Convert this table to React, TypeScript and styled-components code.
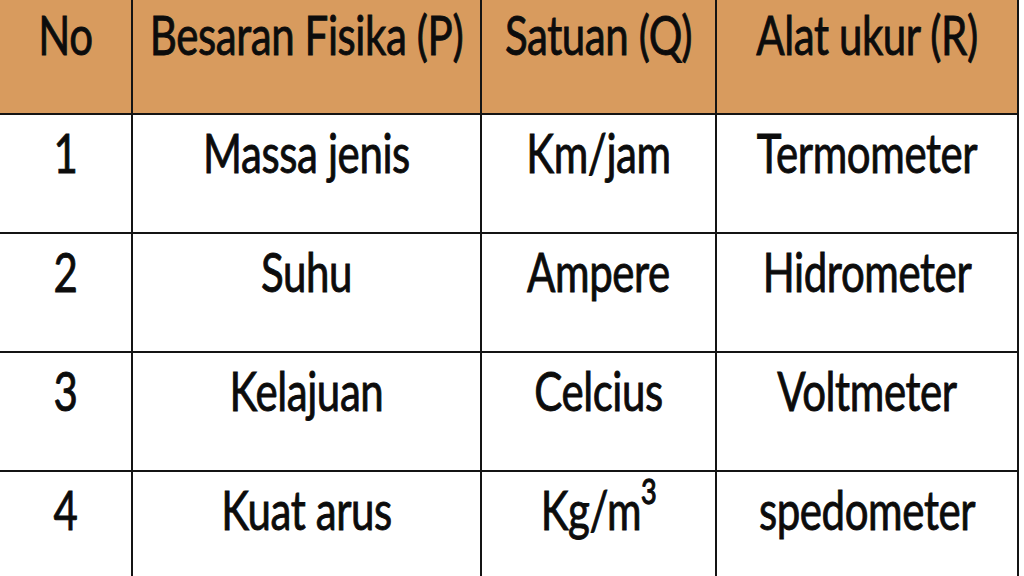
import { createGlobalStyle } from 'styled-components'
import styled from 'styled-components'

const GlobalStyle = createGlobalStyle`
  html, body {
    margin: 0;
    padding: 0;
    background: #ffffff;
    overflow: hidden;
  }
  body {
    width: 1024px;
    height: 576px;
    font-family: Lato, 'Open Sans', sans-serif;
  }
`

const Page = styled.div`
  width: 1024px;
  height: 576px;
  overflow: hidden;
  background: #ffffff;
`

const Table = styled.table`
  border-collapse: collapse;
  table-layout: fixed;
  margin: -2px 0 0 -2px;
  width: 1021px;
`

const Row = styled.tr<{ $head?: boolean }>`
  height: ${(p) => (p.$head ? '115px' : '119px')};
`

const Cell = styled.td<{ $head?: boolean }>`
  border: 2px solid #141414;
  background: ${(p) => (p.$head ? '#d89b5e' : '#ffffff')};
  padding: ${(p) => (p.$head ? '14px 0 0' : '17px 0 0')};
  vertical-align: top;
  text-align: center;
  color: #0c0c0c;
  font-weight: 400;
`

const Label = styled.span`
  display: inline-block;
  font-size: 42px;
  line-height: 40px;
  letter-spacing: -0.4px;
  transform: scaleY(1.3);
  white-space: nowrap;
  -webkit-text-stroke: 0.7px #0c0c0c;
`

const Sup = styled.span`
  display: inline-block;
  font-size: 27px;
  line-height: 0;
  vertical-align: top;
  position: relative;
  top: 6px;
  margin-left: 0;
  -webkit-text-stroke: 1px #0c0c0c;
`

const columns = [133, 349, 235, 302]

const header = ['No', 'Besaran Fisika (P)', 'Satuan (Q)', 'Alat ukur (R)']

const rows = [
  ['1', 'Massa jenis', 'Km/jam', 'Termometer'],
  ['2', 'Suhu', 'Ampere', 'Hidrometer'],
  ['3', 'Kelajuan', 'Celcius', 'Voltmeter'],
  ['4', 'Kuat arus', 'Kg/m3', 'spedometer'],
]

function renderText(text: string) {
  if (text === 'Kg/m3') {
    return (
      <Label>
        Kg/m<Sup>3</Sup>
      </Label>
    )
  }
  return <Label>{text}</Label>
}

export default function App() {
  return (
    <Page>
      <GlobalStyle />
      <Table>
        <colgroup>
          {columns.map((w, i) => (
            <col key={i} style={{ width: w }} />
          ))}
        </colgroup>
        <thead>
          <Row $head>
            {header.map((h) => (
              <Cell as="th" $head key={h}>
                {renderText(h)}
              </Cell>
            ))}
          </Row>
        </thead>
        <tbody>
          {rows.map((row) => (
            <Row key={row[0]}>
              {row.map((c, i) => (
                <Cell key={i}>{renderText(c)}</Cell>
              ))}
            </Row>
          ))}
        </tbody>
      </Table>
    </Page>
  )
}
